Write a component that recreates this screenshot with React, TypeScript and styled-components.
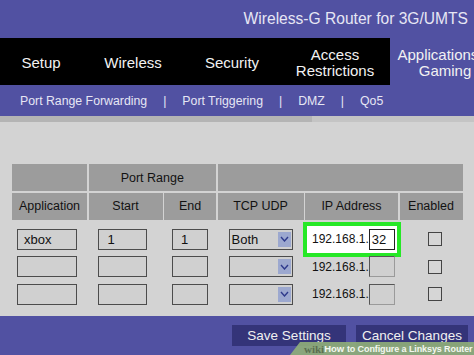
import React from "react";
import styled, { createGlobalStyle } from "styled-components";

const GlobalStyle = createGlobalStyle`
  html, body {
    margin: 0;
    padding: 0;
    background: #d3d3d3;
  }
  body {
    font-family: "Liberation Sans", Arial, sans-serif;
    overflow: hidden;
  }
`;

const purple = "#5151a2";
const columns = "75px 74px 52px 86px 93px 63px";

type Tab = { label: string[]; width: number; active?: boolean };

const tabs: Tab[] = [
  { label: ["Setup"], width: 82 },
  { label: ["Wireless"], width: 102 },
  { label: ["Security"], width: 96 },
  { label: ["Access", "Restrictions"], width: 110 },
  { label: ["Applications &", "Gaming"], width: 110, active: true },
];

const subLinks = ["Port Range Forwarding", "Port Triggering", "DMZ", "Qo5"];

type Row = { app: string; start: string; end: string; proto: string; ip: string; highlight?: boolean };

const rows: Row[] = [
  { app: "xbox", start: "1", end: "1", proto: "Both", ip: "32", highlight: true },
  { app: "", start: "", end: "", proto: "", ip: "" },
  { app: "", start: "", end: "", proto: "", ip: "" },
];

export default function App() {
  return (
    <>
      <GlobalStyle />
      <Page>
        <Banner>
          <Title>Wireless-G Router for 3G/UMTS</Title>
        </Banner>

        <NavBar>
          {tabs.map((t) => (
            <NavTab key={t.label.join()} $width={t.width} $active={t.active}>
              {t.label.map((l) => (
                <span key={l}>{l}</span>
              ))}
            </NavTab>
          ))}
        </NavBar>

        <SubNav>
          {subLinks.map((s, i) => (
            <React.Fragment key={s}>
              {i > 0 && <Divider>|</Divider>}
              <span>{s}</span>
            </React.Fragment>
          ))}
        </SubNav>
        <Stripe />

        <Content>
          <HeadGrid>
            <HeadCell />
            <HeadCell $span={2}>Port Range</HeadCell>
            <HeadCell $span={3} />
            <HeadCell>Application</HeadCell>
            <HeadCell>Start</HeadCell>
            <HeadCell>End</HeadCell>
            <HeadCell>TCP UDP</HeadCell>
            <HeadCell>IP Address</HeadCell>
            <HeadCell>Enabled</HeadCell>
          </HeadGrid>

          <BodyGrid>
            {rows.map((r, i) => (
              <React.Fragment key={i}>
                <DataCell $pad={5}>
                  <Field $width={60} $indent={6}>{r.app}</Field>
                </DataCell>
                <DataCell $pad={9}>
                  <Field $width={49} $indent={9}>{r.start}</Field>
                </DataCell>
                <DataCell $pad={8}>
                  <Field $width={36} $indent={8}>{r.end}</Field>
                </DataCell>
                <DataCell $pad={11}>
                  <Select>
                    <span>{r.proto}</span>
                    <Arrow>
                      <svg width="9" height="6" viewBox="0 0 9 6">
                        <path d="M1 1 L4.5 5 L8 1" stroke="#2e3a8c" strokeWidth="1.4" fill="none" />
                      </svg>
                    </Arrow>
                  </Select>
                </DataCell>
                <DataCell $pad={0}>
                  <IpBox $highlight={r.highlight}>
                    <IpPrefix>192.168.1.</IpPrefix>
                    <IpField $highlight={r.highlight}>{r.ip}</IpField>
                  </IpBox>
                </DataCell>
                <DataCell $pad={28}>
                  <Check />
                </DataCell>
              </React.Fragment>
            ))}
          </BodyGrid>
        </Content>

        <Footer>
          <Button $width={114}>Save Settings</Button>
          <Button $width={112}>Cancel Changes</Button>
          <Watermark>
            <WikiMark>wiki</WikiMark>
            How&nbsp;<Light>to Configure a Linksys Router</Light>
          </Watermark>
        </Footer>
      </Page>
    </>
  );
}

const Page = styled.div`
  width: 474px;
  height: 355px;
  display: flex;
  flex-direction: column;
  background: #d3d3d3;
  overflow: hidden;
`;

const Banner = styled.div`
  height: 38px;
  background: ${purple};
  display: flex;
  align-items: center;
  justify-content: flex-end;
  padding-right: 6px;
`;

const Title = styled.div`
  color: #e6e6f4;
  font-size: 15.6px;
  margin-top: -1px;
`;

const NavBar = styled.div`
  height: 47px;
  display: flex;
  background: #000;
  overflow: hidden;
`;

const NavTab = styled.div<{ $width: number; $active?: boolean }>`
  flex: 0 0 ${(p) => p.$width}px;
  display: flex;
  flex-direction: column;
  align-items: center;
  justify-content: center;
  background: ${(p) => (p.$active ? purple : "#000")};
  color: #f2f2f2;
  font-size: 15px;
  line-height: 16px;
  white-space: nowrap;
  padding-top: 2px;
`;

const SubNav = styled.div`
  height: 31px;
  background: ${purple};
  display: flex;
  align-items: center;
  padding-left: 20px;
  color: #e6e6f4;
  font-size: 12.3px;
`;

const Divider = styled.span`
  margin: 0 16px;
`;

const Stripe = styled.div`
  height: 6px;
  background: linear-gradient(to right, #b4b4b4 0, #b4b4b4 312px, #c4c4c4 312px);
`;

const Content = styled.div`
  flex: 1;
  padding: 42px 12px 0;
`;

const HeadGrid = styled.div`
  width: 450px;
  display: grid;
  grid-template-columns: ${columns};
  grid-auto-rows: 27px;
  gap: 1.5px;
`;

const HeadCell = styled.div<{ $span?: number }>`
  grid-column: span ${(p) => p.$span ?? 1};
  background: #9c9c9c;
  display: flex;
  align-items: center;
  justify-content: center;
  font-size: 12.5px;
  color: #121212;
`;

const BodyGrid = styled.div`
  width: 450px;
  margin-top: 6px;
  display: grid;
  grid-template-columns: ${columns};
  grid-auto-rows: 27.5px;
  column-gap: 1.5px;
`;

const DataCell = styled.div<{ $pad: number }>`
  display: flex;
  align-items: center;
  padding-left: ${(p) => p.$pad}px;
`;

const Field = styled.div<{ $width: number; $indent: number }>`
  width: ${(p) => p.$width}px;
  height: 21px;
  box-sizing: border-box;
  border: 1.5px solid #4c4c4c;
  background: #d0d0d0;
  display: flex;
  align-items: center;
  padding-left: ${(p) => p.$indent}px;
  font-size: 13px;
  color: #111;
`;

const Select = styled.div`
  width: 64px;
  height: 21px;
  box-sizing: border-box;
  border: 1.5px solid #4c4c4c;
  background: #d0d0d0;
  display: flex;
  align-items: center;
  justify-content: space-between;
  padding: 0 1px 0 2px;
  font-size: 13px;
  color: #111;
`;

const Arrow = styled.div`
  width: 13px;
  height: 15px;
  background: #9ca8cf;
  display: flex;
  align-items: center;
  justify-content: center;
`;

const IpBox = styled.div<{ $highlight?: boolean }>`
  flex: 1;
  display: flex;
  align-items: center;
  box-sizing: border-box;
  height: ${(p) => (p.$highlight ? 35 : 27)}px;
  margin: ${(p) => (p.$highlight ? "-4px -3px -4px -2px" : "0")};
  padding-left: ${(p) => (p.$highlight ? 5 : 7)}px;
  border: ${(p) => (p.$highlight ? "4px solid #26e826" : "none")};
  background: ${(p) => (p.$highlight ? "#fff" : "transparent")};
`;

const IpPrefix = styled.span`
  flex: none;
  font-size: 12px;
  color: #111;
`;

const IpField = styled.div<{ $highlight?: boolean }>`
  flex: none;
  width: 26px;
  height: 21px;
  box-sizing: border-box;
  border: 1.5px solid ${(p) => (p.$highlight ? "#222" : "#555")};
  border-right-color: ${(p) => (p.$highlight ? "#222" : "#9a9a9a")};
  border-bottom-color: ${(p) => (p.$highlight ? "#222" : "#9a9a9a")};
  background: ${(p) => (p.$highlight ? "#fff" : "#d0d0d0")};
  font-size: 13px;
  color: #111;
  display: flex;
  align-items: center;
  padding-left: 2px;
`;

const Check = styled.div`
  width: 14px;
  height: 14px;
  box-sizing: border-box;
  border: 1.5px solid #444;
  background: #d6d6d6;
`;

const Footer = styled.div`
  height: 39px;
  background: ${purple};
  display: flex;
  justify-content: flex-end;
  align-items: flex-start;
  gap: 10px;
  padding: 9px 6px 0 0;
  box-sizing: border-box;
  position: relative;
`;

const Button = styled.div<{ $width: number }>`
  width: ${(p) => p.$width}px;
  height: 21px;
  background: #343479;
  color: #f0f0f0;
  font-size: 13.5px;
  white-space: nowrap;
  display: flex;
  align-items: center;
  justify-content: center;
`;

const Watermark = styled.div`
  position: absolute;
  right: 0;
  bottom: 0;
  width: 184px;
  height: 13px;
  background: rgba(142, 172, 122, 0.93);
  clip-path: polygon(10px 0, 100% 0, 100% 100%, 0 100%);
  display: flex;
  align-items: center;
  padding-left: 14px;
  box-sizing: border-box;
  color: #f4f7f0;
  font-size: 9.5px;
  font-weight: bold;
  white-space: nowrap;
  overflow: hidden;
`;

const WikiMark = styled.span`
  font-family: "Liberation Serif", serif;
  font-size: 11px;
  color: #5b6e50;
`;

const Light = styled.span`
  font-size: 9px;
  letter-spacing: -0.1px;
`;
